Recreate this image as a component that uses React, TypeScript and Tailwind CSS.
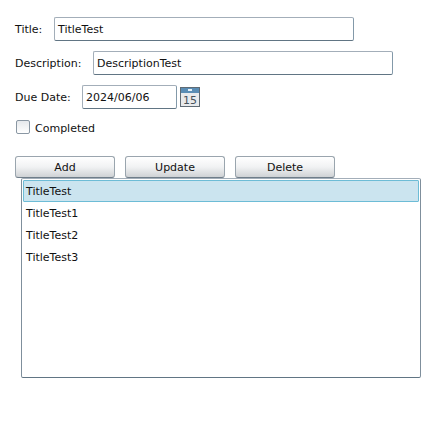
import React from "react";

const items = ["TitleTest", "TitleTest1", "TitleTest2", "TitleTest3"];
const buttons = ["Add", "Update", "Delete"];

function CalendarIcon() {
  return (
    <svg width="20" height="20" viewBox="0 0 20 20" className="ml-[3px]">
      <rect x="0.5" y="0.5" width="19" height="19" fill="#e4e7ea" stroke="#5f6b75" />
      <rect x="1" y="1" width="18" height="5" fill="#5a8db5" />
      <rect x="8" y="2" width="4" height="2" fill="#e6f2fa" />
      <rect x="1" y="6" width="18" height="13" fill="#e8eaec" />
      <text x="10" y="17" textAnchor="middle" fontSize="11" fontFamily="'DejaVu Sans', sans-serif" fill="#46525c">
        15
      </text>
    </svg>
  );
}

export default function App() {
  return (
    <div className="w-[441px] h-[424px] bg-white pt-[17px] pl-[15px] text-[11px] text-[#111] font-['DejaVu_Sans',sans-serif] overflow-hidden">
      {/* Title */}
      <div className="flex items-center h-[24px]">
        <span className="w-[39px] pt-[2px]">Title:</span>
        <div className="w-[300px] h-[24px] flex items-center pt-[2px] px-[3px] border border-[#a3aeb9] border-r-[#8399a9] border-b-[#617584] rounded-[2px]">
          TitleTest
        </div>
      </div>

      {/* Description */}
      <div className="flex items-center h-[24px] mt-[10px]">
        <span className="w-[78px] pt-[2px]">Description:</span>
        <div className="w-[300px] h-[24px] flex items-center pt-[2px] px-[3px] border border-[#a3aeb9] border-r-[#8399a9] border-b-[#617584] rounded-[2px]">
          DescriptionTest
        </div>
      </div>

      {/* Due date */}
      <div className="flex items-center h-[24px] mt-[10px]">
        <span className="w-[67px] pt-[2px]">Due Date:</span>
        <div className="w-[95px] h-[24px] flex items-center pt-[2px] px-[3px] border border-[#a3aeb9] border-r-[#8399a9] border-b-[#617584] rounded-[2px]">
          2024/06/06
        </div>
        <CalendarIcon />
      </div>

      {/* Completed */}
      <div className="flex items-center h-[14px] mt-[11px] ml-[1px]">
        <div className="w-[14px] h-[14px] border border-[#8a97a3] rounded-[2px] bg-gradient-to-b from-[#e6e9ec] to-white" />
        <span className="ml-[5px] pt-[5px]">Completed</span>
      </div>

      {/* Buttons */}
      <div className="flex gap-[10px] mt-[22px]">
        {buttons.map((b) => (
          <div
            key={b}
            className="w-[100px] h-[22px] flex items-center justify-center pt-[2px] border border-[#9aa5ae] border-b-[#6f7d89] rounded-[3px] bg-gradient-to-b from-white via-[#f1f2f3] to-[#cfd2d5]"
          >
            {b}
          </div>
        ))}
      </div>

      {/* List */}
      <div className="w-[400px] h-[200px] ml-[6px] p-[1px] border border-[#a3aeb9] border-l-[#7f8f9c] border-r-[#7f8f9c] border-b-[#617584] rounded-[2px]">
        {items.map((t, i) => (
          <div
            key={t}
            className={
              i === 0
                ? "h-[22px] flex items-center pt-[2px] px-[2px] bg-[#cbe4ef] border border-[#6dbcd6] rounded-[1px]"
                : "h-[22px] flex items-center pt-[2px] px-[3px]"
            }
          >
            {t}
          </div>
        ))}
      </div>
    </div>
  );
}
